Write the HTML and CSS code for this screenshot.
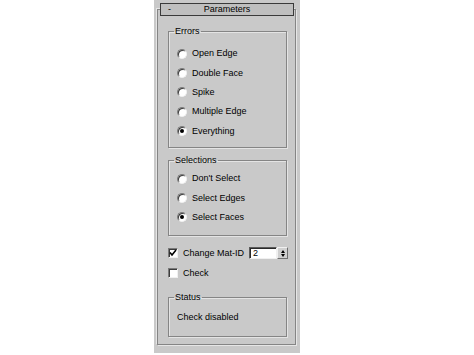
FILE: index.html
```html
<!DOCTYPE html>
<html>
<head>
<meta charset="utf-8">
<link rel="stylesheet" href="styles.css">
</head>
<body>
<div class="panel">
  <div class="frame">
    <div class="header"><span class="minus">-</span><span class="title">Parameters</span><span></span></div>
    <fieldset class="group errors">
      <legend>Errors</legend>
      <div class="radio"><span class="dot"></span>Open Edge</div>
      <div class="radio"><span class="dot"></span>Double Face</div>
      <div class="radio"><span class="dot"></span>Spike</div>
      <div class="radio"><span class="dot"></span>Multiple Edge</div>
      <div class="radio"><span class="dot on"></span>Everything</div>
    </fieldset>
    <fieldset class="group selections">
      <legend>Selections</legend>
      <div class="radio"><span class="dot"></span>Don't Select</div>
      <div class="radio"><span class="dot"></span>Select Edges</div>
      <div class="radio"><span class="dot on"></span>Select Faces</div>
    </fieldset>
    <div class="check-row first">
      <span class="box"><svg width="8" height="8" viewBox="0 0 8 8"><polyline points="1,3.5 3,6 7,1" fill="none" stroke="#000" stroke-width="1.6"/></svg></span>
      <span class="label">Change Mat-ID</span>
      <span class="spinner"><span class="field">2</span><span class="arrows"><span class="up"></span><span class="down"></span></span></span>
    </div>
    <div class="check-row">
      <span class="box"></span>
      <span class="label">Check</span>
    </div>
    <fieldset class="group status">
      <legend>Status</legend>
      <div class="status-text">Check disabled</div>
    </fieldset>
  </div>
</div>
</body>
</html>
```
FILE: styles.css
```css
* { box-sizing: border-box; }
html, body { margin: 0; padding: 0; background: #fff; }
body {
  font-family: "Liberation Sans", Arial, sans-serif;
  font-size: 9px;
  line-height: 11px;
  color: #000;
}
.panel {
  margin-left: 154px;
  width: 146px;
  height: 353px;
  background: #c9c9c9;
  padding-top: 9px;
}
.frame {
  margin: 0 4px 0 3px;
  border: 1px solid #858585;
  box-shadow: -1px -1px 0 #e6e6e6, 1px 1px 0 #e6e6e6;
  padding-bottom: 7px;
}
.header {
  margin: -7px 1px 0 2px;
  height: 13px;
  border: 1px solid #3a3a3a;
  background: #bfbfbf;
  display: grid;
  grid-template-columns: 1fr auto 1fr;
  align-items: center;
  line-height: 11px;
}
.minus { padding-left: 7px; }
.title { text-align: center; }
.group {
  margin: 0 8px 0 10px;
  border: 1px solid #858585;
  box-shadow: 1px 1px 0 #e4e4e4, inset 1px 1px 0 #e4e4e4;
  padding: 0 0 0 8px;
  min-width: 0;
}
.group legend {
  padding: 0 1px;
  margin-left: -3px;
  line-height: 11px;
}
.errors { margin-top: 10px; padding-top: 7px; padding-bottom: 6px; }
.selections { margin-top: 7px; padding-top: 3px; padding-bottom: 8px; }
.status { margin-top: 9px; padding-top: 9px; padding-bottom: 13px; }
.radio {
  height: 19.4px;
  display: flex;
  align-items: center;
  gap: 5px;
}
.dot {
  width: 10px;
  height: 10px;
  border-radius: 50%;
  background: #fff;
  border: 1px solid;
  border-color: #7a7a7a #f0f0f0 #f0f0f0 #7a7a7a;
  box-shadow: inset 1px 1px 0 #3c3c3c;
  display: flex;
  align-items: center;
  justify-content: center;
  flex: none;
}
.dot.on::after {
  content: "";
  width: 4px;
  height: 4px;
  border-radius: 50%;
  background: #000;
}
.check-row {
  height: 20px;
  margin-left: 10px;
  display: flex;
  align-items: center;
}
.check-row.first { margin-top: 7px; }
.box {
  width: 10px;
  height: 10px;
  background: #fff;
  border: 1px solid;
  border-color: #7a7a7a #f0f0f0 #f0f0f0 #7a7a7a;
  box-shadow: inset 1px 1px 0 #3c3c3c;
  display: flex;
  align-items: center;
  justify-content: center;
  flex: none;
}
.box svg { display: block; }
.label { margin-left: 5px; }
.spinner {
  margin-left: 5px;
  display: flex;
  height: 12px;
}
.field {
  width: 28px;
  height: 12px;
  background: #fff;
  border: 1px solid;
  border-color: #5a5a5a #f0f0f0 #f0f0f0 #5a5a5a;
  box-shadow: inset 1px 1px 0 #2a2a2a;
  padding-left: 3px;
  line-height: 10px;
}
.arrows {
  width: 11px;
  height: 12px;
  background: #d0d0d0;
  border: 1px solid;
  border-color: #f0f0f0 #707070 #707070 #f0f0f0;
  display: flex;
  flex-direction: column;
  align-items: center;
  justify-content: center;
  gap: 1px;
}
.up, .down {
  width: 0;
  height: 0;
  border-left: 2px solid transparent;
  border-right: 2px solid transparent;
}
.up { border-bottom: 3px solid #000; }
.down { border-top: 3px solid #000; }
.status-text { line-height: 11px; }
```
